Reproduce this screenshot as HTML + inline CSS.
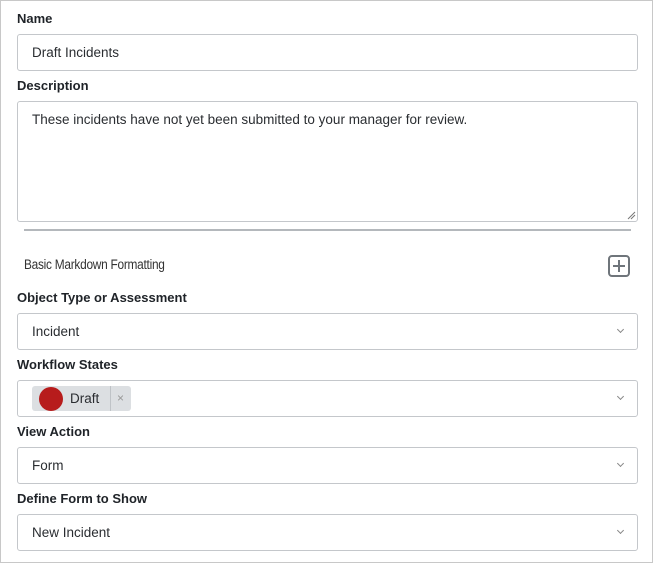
<!DOCTYPE html>
<html><head><style>
body{margin:0;width:653px;height:563px;overflow:hidden;font-family:"Liberation Sans",sans-serif;background:#fff;}
.frame{position:absolute;left:0;top:0;width:651px;height:561px;border:1px solid #c8c8c8;}
.lbl{position:absolute;left:17px;font-size:13px;font-weight:bold;color:#1f2328;}
.inp{position:absolute;left:17px;width:619px;height:35px;border:1px solid #c4c7cb;border-radius:3px;box-sizing:content-box;}
.inp span.t{position:absolute;left:14px;top:10px;font-size:13.5px;color:#2a2d31;}
.chev{position:absolute;right:14px;top:13px;width:4px;height:4px;border-right:1px solid #888;border-bottom:1px solid #888;transform:rotate(45deg);}
</style></head><body>
<div class="frame"></div>
<div class="lbl" style="top:11px">Name</div>
<div class="inp" style="top:34px"><span class="t">Draft Incidents</span></div>
<div class="lbl" style="top:78px">Description</div>
<div class="inp" style="top:101px;height:119px"><span class="t">These incidents have not yet been submitted to your manager for review.</span>
<svg style="position:absolute;right:1px;bottom:1px" width="9" height="9"><path d="M8 1L1 8M8 4L4 8" stroke="#777" stroke-width="1"/></svg></div>
<div style="position:absolute;left:24px;top:229px;width:607px;height:2px;background:#b4b8bc"></div>
<div style="position:absolute;left:24px;top:257px;font-size:13.5px;color:#333;letter-spacing:-0.3px;transform:scaleX(0.88);transform-origin:left;white-space:nowrap">Basic Markdown Formatting</div>
<svg style="position:absolute;left:608px;top:255px" width="23" height="22"><rect x="1" y="1" width="20" height="20" rx="3" fill="none" stroke="#6f757b" stroke-width="2"/><path d="M11 5V17M5 11H17" stroke="#6f757b" stroke-width="2"/></svg>
<div class="lbl" style="top:290px">Object Type or Assessment</div>
<div class="inp" style="top:313px"><span class="t">Incident</span><i class="chev"></i></div>
<div class="lbl" style="top:357px">Workflow States</div>
<div class="inp" style="top:380px"><i class="chev"></i>
<div style="position:absolute;left:14px;top:5px;width:99px;height:25px;background:#dcdfe2;border-radius:3px">
<div style="position:absolute;left:7px;top:1px;width:24px;height:24px;border-radius:50%;background:#b71c1c"></div>
<span style="position:absolute;left:38px;top:5px;font-size:13.5px;color:#2a2d31">Draft</span>
<div style="position:absolute;left:78px;top:0;width:1px;height:25px;background:#bfc3c7"></div>
<span style="position:absolute;left:85px;top:5px;font-size:12px;color:#999">×</span></div></div>
<div class="lbl" style="top:424px">View Action</div>
<div class="inp" style="top:447px"><span class="t">Form</span><i class="chev"></i></div>
<div class="lbl" style="top:491px">Define Form to Show</div>
<div class="inp" style="top:514px"><span class="t">New Incident</span><i class="chev"></i></div>
</body></html>
